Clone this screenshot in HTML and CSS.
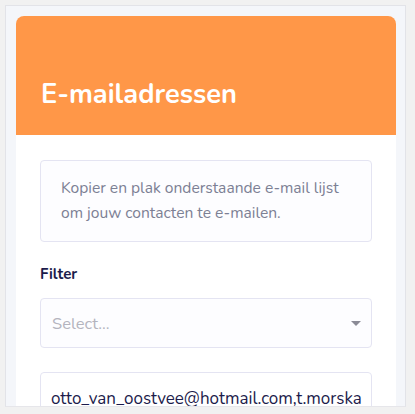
FILE: index.html
```html
<!DOCTYPE html>
<html>
<head>
<meta charset="utf-8">
<link rel="stylesheet" href="styles.css">
</head>
<body>
<div class="frame">
  <div class="card">
    <div class="card-header">
      <h1 class="title">E-mailadressen</h1>
    </div>
    <div class="card-body">
      <div class="info">Kopier en plak onderstaande e-mail lijst om jouw contacten te e-mailen.</div>
      <label class="label">Filter</label>
      <div class="select">
        <span class="placeholder">Select...</span>
        <svg class="caret" width="10" height="5" viewBox="0 0 10 5"><path d="M0 0H10L5 5Z" fill="#8b8b96"/></svg>
      </div>
      <div class="textarea">otto_van_oostvee@hotmail.com,t.morska</div>
    </div>
  </div>
</div>
</body>
</html>
```
FILE: styles.css
```css
html, body {
  margin: 0;
  padding: 0;
  background: #f1f1f1;
  font-family: "Nunito", "Lato", "Noto Sans", sans-serif;
}
.frame {
  box-sizing: border-box;
  margin: 5px 0 0 5px;
  width: 401px;
  height: 402px;
  border: 1px solid #e2e3e8;
  border-bottom-color: #e6e6ea;
  background: #f4f6fa;
  padding: 10px 9px 0 10px;
  overflow: hidden;
}
.card {
  background: #ffffff;
  border-radius: 8px 8px 0 0;
  overflow: hidden;
  height: 600px;
}
.card-header {
  background: #ff9748;
  height: 119px;
  box-sizing: border-box;
  padding: 0 25px;
  display: flex;
  align-items: flex-start;
}
.title {
  margin: 59px 0 0 0;
  color: #ffffff;
  font-size: 27.2px;
  font-weight: 700;
  line-height: 40px;
}
.card-body {
  padding: 25px 24px 0 24px;
  display: flex;
  flex-direction: column;
}
.info {
  box-sizing: border-box;
  border: 1px solid #e4e4f2;
  border-radius: 4px;
  background: #fdfdff;
  height: 82px;
  padding: 15px 20px;
  color: #7c8094;
  font-size: 15.6px;
  line-height: 25px;
}
.label {
  margin-top: 22px;
  color: #1c1b4b;
  font-weight: 700;
  font-size: 15px;
  line-height: 20px;
}
.select {
  box-sizing: border-box;
  margin-top: 14px;
  height: 50px;
  border: 1px solid #e4e4f2;
  border-radius: 4px;
  background: #fdfdff;
  display: flex;
  align-items: center;
  justify-content: space-between;
  padding: 0 10px 0 11px;
}
.placeholder {
  color: #b4b4be;
  font-size: 16.5px;
}
.caret {
  display: block;
}
.textarea {
  box-sizing: border-box;
  margin-top: 24px;
  height: 80px;
  border: 1px solid #e4e4f2;
  border-radius: 4px;
  background: #ffffff;
  padding: 14px 10px 0 10px;
  color: #1c1b4b;
  font-size: 17px;
  white-space: nowrap;
  overflow: hidden;
}
```
